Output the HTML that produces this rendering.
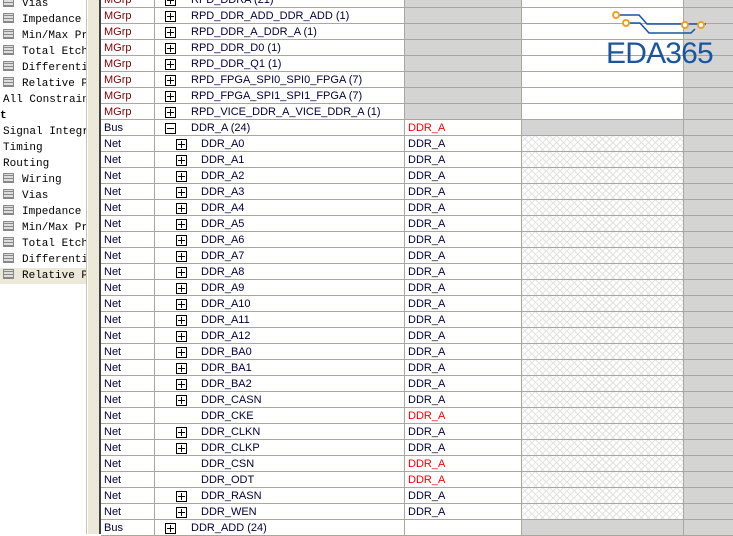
<!DOCTYPE html>
<html><head><meta charset="utf-8"><style>
*{margin:0;padding:0;box-sizing:border-box}
body{width:733px;height:534px;overflow:hidden;background:#fff;position:relative;font-family:"Liberation Sans",Arial,sans-serif;font-size:11px}
.lp{position:absolute;left:0;top:0;width:86px;height:534px;background:#fff;font-family:"Liberation Mono",monospace;font-size:11px;color:#000;overflow:hidden}
.li{position:absolute;left:0;height:16px;line-height:16px;white-space:nowrap}
.ic{display:inline-block;width:11px;height:10px;vertical-align:-1px;margin:0 8px 0 3px;border:1px solid #888;background:repeating-linear-gradient(0deg,#888 0 1px,#ddd 1px 3px)}
.sep1{position:absolute;left:86px;top:0;width:2px;height:534px;background:#fff;border-left:1px solid #c8c4b0}
.sep{position:absolute;left:88px;top:0;width:11px;height:534px;background:#ece9d8}
.sep2{position:absolute;left:99px;top:0;width:2px;height:534px;background:#404040}
.r{position:absolute;left:101px;width:632px;height:16px;border-bottom:1px solid #aca899}
.c{position:absolute;top:0;height:15px;line-height:16px;border-right:1px solid #aca899;white-space:nowrap;overflow:hidden}
.c1{left:0;width:54px;padding-left:3px}
.c2{left:54px;width:250px}
.c3{left:304px;width:117px;padding-left:3px}
.c4{left:421px;width:162px}
.c5{left:583px;width:49px;background:#d4d4d4;border-right:none}
.g{background:#d4d4d4}
.h{background-color:#fff;background-image:repeating-linear-gradient(45deg,#e2e2e2 0 1px,transparent 1px 5px),repeating-linear-gradient(-45deg,#e2e2e2 0 1px,transparent 1px 5px)}
.m{color:#800000}.n{color:#00003c}.red{color:#f00}
.bx{position:absolute;top:3px;width:11px;height:11px;border:1px solid #000;background:#fff}
.bx:before{content:"";position:absolute;left:1px;top:4px;width:7px;height:1px;background:#000}
.p:after{content:"";position:absolute;left:4px;top:1px;width:1px;height:7px;background:#000}
.b{left:10px}.nb{left:21px}
.t{position:absolute;top:0}
.tb{left:36px}.tn{left:46px}
</style></head><body>
<div class="lp">
<div class="li" style="top:-4px"><span class="ic"></span>Vias</div>
<div class="li" style="top:12px"><span class="ic"></span>Impedance</div>
<div class="li" style="top:28px"><span class="ic"></span>Min/Max Pro</div>
<div class="li" style="top:44px"><span class="ic"></span>Total Etch</div>
<div class="li" style="top:60px"><span class="ic"></span>Differentia</div>
<div class="li" style="top:76px"><span class="ic"></span>Relative Pr</div>
<div class="li" style="top:92px;left:3px">All Constraint</div>
<div class="li" style="top:108px;font-weight:bold">t</div>
<div class="li" style="top:124px;left:3px">Signal Integri</div>
<div class="li" style="top:140px;left:3px">Timing</div>
<div class="li" style="top:156px;left:3px">Routing</div>
<div class="li" style="top:172px"><span class="ic"></span>Wiring</div>
<div class="li" style="top:188px"><span class="ic"></span>Vias</div>
<div class="li" style="top:204px"><span class="ic"></span>Impedance</div>
<div class="li" style="top:220px"><span class="ic"></span>Min/Max Pro</div>
<div class="li" style="top:236px"><span class="ic"></span>Total Etch</div>
<div class="li" style="top:252px"><span class="ic"></span>Differentia</div>
<div class="li" style="top:268px;background:#ece9d8;width:86px"><span class="ic"></span>Relative Pr</div>
</div>
<div class="sep1"></div><div class="sep"></div><div class="sep2"></div>

<div class="r" style="top:-8px"><div class="c c1 m">MGrp</div><div class="c c2"><div class="bx p b"></div><span class="t n tb">RPD_DDRA (21)</span></div><div class="c c3 g"></div><div class="c c4"></div><div class="c c5"></div></div>
<div class="r" style="top:8px"><div class="c c1 m">MGrp</div><div class="c c2"><div class="bx p b"></div><span class="t n tb">RPD_DDR_ADD_DDR_ADD (1)</span></div><div class="c c3 g"></div><div class="c c4"></div><div class="c c5"></div></div>
<div class="r" style="top:24px"><div class="c c1 m">MGrp</div><div class="c c2"><div class="bx p b"></div><span class="t n tb">RPD_DDR_A_DDR_A (1)</span></div><div class="c c3 g"></div><div class="c c4"></div><div class="c c5"></div></div>
<div class="r" style="top:40px"><div class="c c1 m">MGrp</div><div class="c c2"><div class="bx p b"></div><span class="t n tb">RPD_DDR_D0 (1)</span></div><div class="c c3 g"></div><div class="c c4"></div><div class="c c5"></div></div>
<div class="r" style="top:56px"><div class="c c1 m">MGrp</div><div class="c c2"><div class="bx p b"></div><span class="t n tb">RPD_DDR_Q1 (1)</span></div><div class="c c3 g"></div><div class="c c4"></div><div class="c c5"></div></div>
<div class="r" style="top:72px"><div class="c c1 m">MGrp</div><div class="c c2"><div class="bx p b"></div><span class="t n tb">RPD_FPGA_SPI0_SPI0_FPGA (7)</span></div><div class="c c3 g"></div><div class="c c4"></div><div class="c c5"></div></div>
<div class="r" style="top:88px"><div class="c c1 m">MGrp</div><div class="c c2"><div class="bx p b"></div><span class="t n tb">RPD_FPGA_SPI1_SPI1_FPGA (7)</span></div><div class="c c3 g"></div><div class="c c4"></div><div class="c c5"></div></div>
<div class="r" style="top:104px"><div class="c c1 m">MGrp</div><div class="c c2"><div class="bx p b"></div><span class="t n tb">RPD_VICE_DDR_A_VICE_DDR_A (1)</span></div><div class="c c3 g"></div><div class="c c4"></div><div class="c c5"></div></div>
<div class="r" style="top:120px"><div class="c c1 n">Bus</div><div class="c c2"><div class="bx b"></div><span class="t n tb">DDR_A (24)</span></div><div class="c c3 red">DDR_A</div><div class="c c4 g"></div><div class="c c5"></div></div>

<div class="r" style="top:136px"><div class="c c1 n">Net</div><div class="c c2"><div class="bx p nb"></div><span class="t n tn">DDR_A0</span></div><div class="c c3 n">DDR_A</div><div class="c c4 h"></div><div class="c c5"></div></div>
<div class="r" style="top:152px"><div class="c c1 n">Net</div><div class="c c2"><div class="bx p nb"></div><span class="t n tn">DDR_A1</span></div><div class="c c3 n">DDR_A</div><div class="c c4 h"></div><div class="c c5"></div></div>
<div class="r" style="top:168px"><div class="c c1 n">Net</div><div class="c c2"><div class="bx p nb"></div><span class="t n tn">DDR_A2</span></div><div class="c c3 n">DDR_A</div><div class="c c4 h"></div><div class="c c5"></div></div>
<div class="r" style="top:184px"><div class="c c1 n">Net</div><div class="c c2"><div class="bx p nb"></div><span class="t n tn">DDR_A3</span></div><div class="c c3 n">DDR_A</div><div class="c c4 h"></div><div class="c c5"></div></div>
<div class="r" style="top:200px"><div class="c c1 n">Net</div><div class="c c2"><div class="bx p nb"></div><span class="t n tn">DDR_A4</span></div><div class="c c3 n">DDR_A</div><div class="c c4 h"></div><div class="c c5"></div></div>
<div class="r" style="top:216px"><div class="c c1 n">Net</div><div class="c c2"><div class="bx p nb"></div><span class="t n tn">DDR_A5</span></div><div class="c c3 n">DDR_A</div><div class="c c4 h"></div><div class="c c5"></div></div>
<div class="r" style="top:232px"><div class="c c1 n">Net</div><div class="c c2"><div class="bx p nb"></div><span class="t n tn">DDR_A6</span></div><div class="c c3 n">DDR_A</div><div class="c c4 h"></div><div class="c c5"></div></div>
<div class="r" style="top:248px"><div class="c c1 n">Net</div><div class="c c2"><div class="bx p nb"></div><span class="t n tn">DDR_A7</span></div><div class="c c3 n">DDR_A</div><div class="c c4 h"></div><div class="c c5"></div></div>
<div class="r" style="top:264px"><div class="c c1 n">Net</div><div class="c c2"><div class="bx p nb"></div><span class="t n tn">DDR_A8</span></div><div class="c c3 n">DDR_A</div><div class="c c4 h"></div><div class="c c5"></div></div>
<div class="r" style="top:280px"><div class="c c1 n">Net</div><div class="c c2"><div class="bx p nb"></div><span class="t n tn">DDR_A9</span></div><div class="c c3 n">DDR_A</div><div class="c c4 h"></div><div class="c c5"></div></div>
<div class="r" style="top:296px"><div class="c c1 n">Net</div><div class="c c2"><div class="bx p nb"></div><span class="t n tn">DDR_A10</span></div><div class="c c3 n">DDR_A</div><div class="c c4 h"></div><div class="c c5"></div></div>
<div class="r" style="top:312px"><div class="c c1 n">Net</div><div class="c c2"><div class="bx p nb"></div><span class="t n tn">DDR_A11</span></div><div class="c c3 n">DDR_A</div><div class="c c4 h"></div><div class="c c5"></div></div>
<div class="r" style="top:328px"><div class="c c1 n">Net</div><div class="c c2"><div class="bx p nb"></div><span class="t n tn">DDR_A12</span></div><div class="c c3 n">DDR_A</div><div class="c c4 h"></div><div class="c c5"></div></div>
<div class="r" style="top:344px"><div class="c c1 n">Net</div><div class="c c2"><div class="bx p nb"></div><span class="t n tn">DDR_BA0</span></div><div class="c c3 n">DDR_A</div><div class="c c4 h"></div><div class="c c5"></div></div>
<div class="r" style="top:360px"><div class="c c1 n">Net</div><div class="c c2"><div class="bx p nb"></div><span class="t n tn">DDR_BA1</span></div><div class="c c3 n">DDR_A</div><div class="c c4 h"></div><div class="c c5"></div></div>
<div class="r" style="top:376px"><div class="c c1 n">Net</div><div class="c c2"><div class="bx p nb"></div><span class="t n tn">DDR_BA2</span></div><div class="c c3 n">DDR_A</div><div class="c c4 h"></div><div class="c c5"></div></div>
<div class="r" style="top:392px"><div class="c c1 n">Net</div><div class="c c2"><div class="bx p nb"></div><span class="t n tn">DDR_CASN</span></div><div class="c c3 n">DDR_A</div><div class="c c4 h"></div><div class="c c5"></div></div>
<div class="r" style="top:408px"><div class="c c1 n">Net</div><div class="c c2"><span class="t n tn">DDR_CKE</span></div><div class="c c3 red">DDR_A</div><div class="c c4 h"></div><div class="c c5"></div></div>
<div class="r" style="top:424px"><div class="c c1 n">Net</div><div class="c c2"><div class="bx p nb"></div><span class="t n tn">DDR_CLKN</span></div><div class="c c3 n">DDR_A</div><div class="c c4 h"></div><div class="c c5"></div></div>
<div class="r" style="top:440px"><div class="c c1 n">Net</div><div class="c c2"><div class="bx p nb"></div><span class="t n tn">DDR_CLKP</span></div><div class="c c3 n">DDR_A</div><div class="c c4 h"></div><div class="c c5"></div></div>
<div class="r" style="top:456px"><div class="c c1 n">Net</div><div class="c c2"><span class="t n tn">DDR_CSN</span></div><div class="c c3 red">DDR_A</div><div class="c c4 h"></div><div class="c c5"></div></div>
<div class="r" style="top:472px"><div class="c c1 n">Net</div><div class="c c2"><span class="t n tn">DDR_ODT</span></div><div class="c c3 red">DDR_A</div><div class="c c4 h"></div><div class="c c5"></div></div>
<div class="r" style="top:488px"><div class="c c1 n">Net</div><div class="c c2"><div class="bx p nb"></div><span class="t n tn">DDR_RASN</span></div><div class="c c3 n">DDR_A</div><div class="c c4 h"></div><div class="c c5"></div></div>
<div class="r" style="top:504px"><div class="c c1 n">Net</div><div class="c c2"><div class="bx p nb"></div><span class="t n tn">DDR_WEN</span></div><div class="c c3 n">DDR_A</div><div class="c c4 h"></div><div class="c c5"></div></div>
<div class="r" style="top:520px"><div class="c c1 n">Bus</div><div class="c c2"><div class="bx p b"></div><span class="t n tb">DDR_ADD (24)</span></div><div class="c c3"></div><div class="c c4 g"></div><div class="c c5"></div></div>

<svg style="position:absolute;left:610px;top:10px" width="100" height="28" viewBox="0 0 100 28">
<path d="M6 5 H29 L37 14 H96" fill="none" stroke="#1a55a0" stroke-width="1.5"/>
<path d="M16 13 H30 L39 23 H81 L85 19" fill="none" stroke="#1a55a0" stroke-width="1.5"/>
<circle cx="6" cy="5" r="3" fill="#fff" stroke="#f0a020" stroke-width="2"/>
<circle cx="16" cy="13" r="3" fill="#fff" stroke="#f0a020" stroke-width="2"/>
<circle cx="75" cy="15" r="3" fill="#fff" stroke="#f0a020" stroke-width="2"/>
<circle cx="91" cy="15" r="3" fill="#fff" stroke="#f0a020" stroke-width="2"/>
</svg>
<div style="position:absolute;left:606px;top:36px;font-size:30px;line-height:36px;color:#1a55a0;font-family:'Liberation Sans',sans-serif;letter-spacing:-0.8px">EDA365</div>
</body></html>
